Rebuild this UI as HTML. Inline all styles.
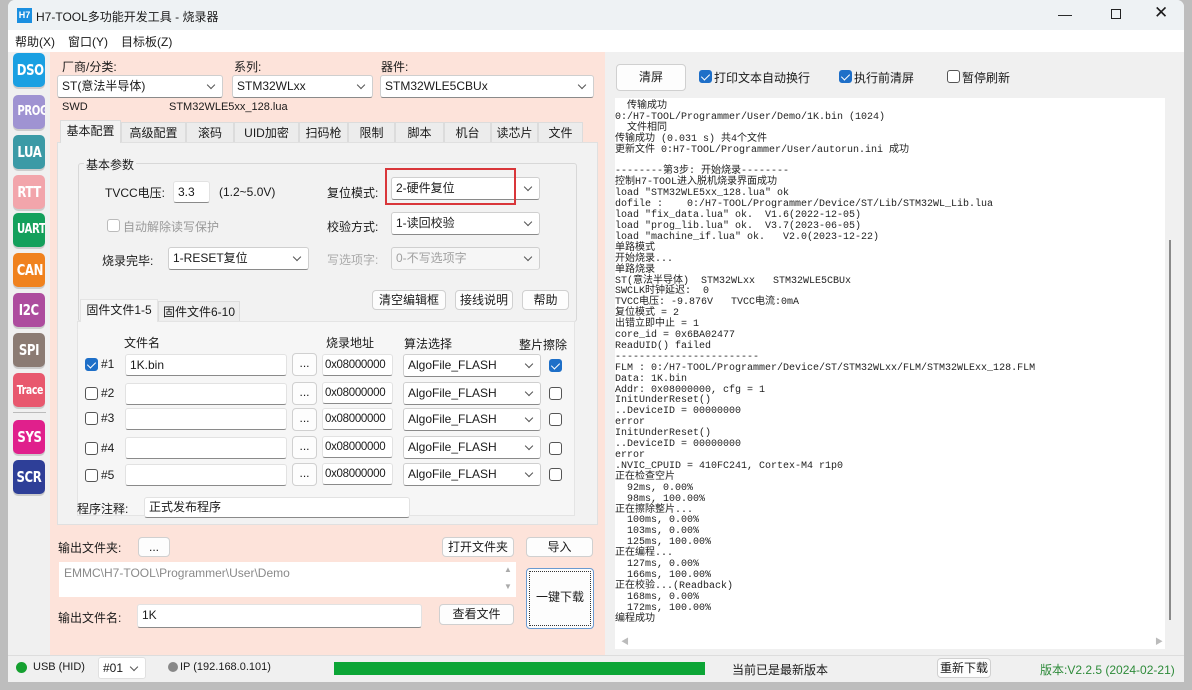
<!DOCTYPE html>
<html><head><meta charset="utf-8"><style>
*{box-sizing:border-box;margin:0;padding:0}
body{width:1192px;height:690px;background:#bdbdbd;font-family:"Liberation Sans","Noto Sans CJK SC",sans-serif;font-size:12px;color:#1a1a1a;position:relative;overflow:hidden}
.a{position:absolute}
.win{left:8px;top:0;width:1176px;height:682px;background:#f0f0f0;border-radius:7px 7px 0 0;overflow:hidden}
.combo{position:absolute;background:#fff;border:1px solid #cfcfcf;border-bottom:1px solid #8a8a8a;border-radius:3px;height:23px;line-height:21px;padding-left:4px;font-size:12px;white-space:nowrap}
.combo:after{content:"";position:absolute;right:8px;top:6px;width:5px;height:5px;border-right:1px solid #555;border-bottom:1px solid #555;transform:rotate(45deg)}
.dis{color:#a0a0a0;background:#f6f6f6;border-bottom-color:#ddd}
.inp{position:absolute;background:#fff;border:1px solid #e2e2e2;border-bottom:1px solid #8a8a8a;border-radius:3px;height:22px;line-height:20px;padding-left:4px;font-size:12px;white-space:nowrap;overflow:hidden}
.addr{padding-left:2px;font-size:11.5px;letter-spacing:-0.3px}
.btn{position:absolute;background:#fdfdfd;border:1px solid #d0d0d0;border-radius:4px;text-align:center;font-size:12px;height:20px;line-height:18px}
.cb{position:absolute;width:13px;height:13px;border:1px solid #555;border-radius:3px;background:#fff}
.cb.on{background:#1e6fc8;border-color:#1e6fc8}
.cb.on:after{content:"";position:absolute;left:3px;top:1px;width:4px;height:7px;border-right:1.5px solid #fff;border-bottom:1.5px solid #fff;transform:rotate(45deg)}
.ic{position:absolute;left:5px;width:32px;height:34px;border-radius:5px;color:#fff;font-weight:bold;font-family:"DejaVu Sans","Liberation Sans",sans-serif;font-size:15px;text-align:center;line-height:34px;box-shadow:0 2px 0 rgba(0,0,0,.15);overflow:hidden;white-space:nowrap}
.ic span{display:inline-block;transform:scaleX(.78);letter-spacing:-0.5px}
.tab{position:absolute;top:122px;height:20px;line-height:20px;text-align:center;background:#ececec;border:1px solid #dcdcdc;border-bottom:none;font-size:12px}
.log{position:absolute;left:615px;top:98px;width:550px;height:537px;background:#fff;font-family:"Liberation Mono","Noto Sans CJK SC",monospace;font-size:10px;line-height:10.9px;white-space:pre;color:#222;padding-top:4px;overflow:hidden}
</style></head><body>
<div class="a win">
<div class="a" style="left:0;top:0;width:1176px;height:30px;background:#eef2f4"></div>
<div class="a" style="left:9px;top:8px;width:15px;height:15px;background:#1a8fe0;color:#fff;font-size:9px;font-weight:bold;text-align:center;line-height:15px">H7</div>
<div class="a" style="left:28px;top:8px;font-size:12px">H7-TOOL多功能开发工具 - 烧录器</div>
<div class="a" style="left:1050px;top:6px;font-size:14px">—</div>
<div class="a" style="left:1103px;top:9px;width:10px;height:10px;border:1px solid #222"></div>
<div class="a" style="left:1146px;top:3px;font-size:17px">✕</div>
<div class="a" style="left:0;top:30px;width:1176px;height:22px;background:#fff"></div>
<div class="a" style="left:7px;top:33px">帮助(X)</div>
<div class="a" style="left:60px;top:33px">窗口(Y)</div>
<div class="a" style="left:113px;top:33px">目标板(Z)</div>
<div class="ic" style="top:53px;background:#1aa0e2"><span>DSO</span></div>
<div class="ic" style="top:95px;background:#9f93d2;font-size:13px"><span>PROG</span></div>
<div class="ic" style="top:135px;background:#3b9aa6"><span>LUA</span></div>
<div class="ic" style="top:175px;background:#f2a5ab"><span>RTT</span></div>
<div class="ic" style="top:213px;background:#14a05c;font-size:13px"><span>UART</span></div>
<div class="ic" style="top:253px;background:#f0821e"><span>CAN</span></div>
<div class="ic" style="top:293px;background:#ad4c9e"><span>I2C</span></div>
<div class="ic" style="top:333px;background:#8b7b73"><span>SPI</span></div>
<div class="ic" style="top:373px;background:#e8586e;font-size:12px"><span>Trace</span></div>
<div class="a" style="left:5px;top:412px;width:33px;height:1px;background:#bbb"></div>
<div class="ic" style="top:420px;background:#e0208c"><span>SYS</span></div>
<div class="ic" style="top:460px;background:#2e3f98"><span>SCR</span></div>
<div class="a" style="left:42px;top:52px;width:555px;height:603px;background:#fde3da"></div>
<div class="a" style="left:54px;top:58px">厂商/分类:</div>
<div class="a" style="left:226px;top:58px">系列:</div>
<div class="a" style="left:373px;top:58px">器件:</div>
<div class="combo" style="left:49px;top:75px;width:166px">ST(意法半导体)</div>
<div class="combo" style="left:224px;top:75px;width:141px">STM32WLxx</div>
<div class="combo" style="left:372px;top:75px;width:214px">STM32WLE5CBUx</div>
<div class="a" style="left:54px;top:101px;font-size:11px">SWD</div>
<div class="a" style="left:161px;top:101px;font-size:11px">STM32WLE5xx_128.lua</div>
<div class="a" style="left:49px;top:142px;width:541px;height:383px;background:#f2f2f2;border:1px solid #e0e0e0"></div>
<div class="tab" style="left:52px;width:61px;background:#f2f2f2;top:120px;height:23px">基本配置</div>
<div class="tab" style="left:113px;width:65px">高级配置</div>
<div class="tab" style="left:178px;width:48px">滚码</div>
<div class="tab" style="left:226px;width:65px">UID加密</div>
<div class="tab" style="left:291px;width:49px">扫码枪</div>
<div class="tab" style="left:340px;width:47px">限制</div>
<div class="tab" style="left:387px;width:49px">脚本</div>
<div class="tab" style="left:436px;width:47px">机台</div>
<div class="tab" style="left:483px;width:47px">读芯片</div>
<div class="tab" style="left:530px;width:45px">文件</div>
<div class="a" style="left:70px;top:163px;width:499px;height:159px;border:1px solid #d8d8d8;border-radius:3px"></div>
<div class="a" style="left:76px;top:156px;background:#f2f2f2;padding:0 2px">基本参数</div>
<div class="a" style="left:97px;top:184px">TVCC电压:</div>
<div class="inp" style="left:165px;top:181px;width:37px">3.3</div>
<div class="a" style="left:211px;top:185px">(1.2~5.0V)</div>
<div class="a" style="left:319px;top:184px">复位模式:</div>
<div class="combo" style="left:383px;top:177px;width:149px">2-硬件复位</div>
<div class="a" style="left:377px;top:168px;width:131px;height:37px;border:2px solid #d9363a"></div>
<div class="cb" style="left:99px;top:219px;border-color:#bbb"></div>
<div class="a" style="left:115px;top:218px;color:#9a9a9a">自动解除读写保护</div>
<div class="a" style="left:319px;top:218px">校验方式:</div>
<div class="combo" style="left:383px;top:212px;width:149px">1-读回校验</div>
<div class="a" style="left:94px;top:252px">烧录完毕:</div>
<div class="combo" style="left:160px;top:247px;width:141px">1-RESET复位</div>
<div class="a" style="left:319px;top:251px;color:#aaa">写选项字:</div>
<div class="combo dis" style="left:383px;top:247px;width:149px">0-不写选项字</div>
<div class="btn" style="left:364px;top:290px;width:74px">清空编辑框</div>
<div class="btn" style="left:447px;top:290px;width:58px">接线说明</div>
<div class="btn" style="left:514px;top:290px;width:47px">帮助</div>
<div class="a" style="left:69px;top:321px;width:498px;height:195px;background:#f6f6f6;border:1px solid #e4e4e4"></div>
<div class="tab" style="left:72px;top:299px;width:78px;height:23px;background:#f6f6f6;border-color:#e4e4e4">固件文件1-5</div>
<div class="tab" style="left:150px;top:301px;width:82px;background:#ededed">固件文件6-10</div>
<div class="a" style="left:116px;top:334px">文件名</div>
<div class="a" style="left:318px;top:334px">烧录地址</div>
<div class="a" style="left:396px;top:335px">算法选择</div>
<div class="a" style="left:511px;top:336px">整片擦除</div>
<div class="cb on" style="left:77px;top:358px"></div><div class="a" style="left:93px;top:357px">#1</div>
<div class="inp" style="left:117px;top:354px;width:162px">1K.bin</div>
<div class="btn" style="left:284px;top:353px;width:25px;height:23px">...</div>
<div class="inp addr" style="left:314px;top:354px;width:71px">0x08000000</div>
<div class="combo" style="left:395px;top:354px;width:138px">AlgoFile_FLASH</div>
<div class="cb on" style="left:541px;top:359px"></div>
<div class="cb" style="left:77px;top:387px"></div><div class="a" style="left:93px;top:386px">#2</div>
<div class="inp" style="left:117px;top:383px;width:162px"></div>
<div class="btn" style="left:284px;top:382px;width:25px;height:23px">...</div>
<div class="inp addr" style="left:314px;top:382px;width:71px">0x08000000</div>
<div class="combo" style="left:395px;top:382px;width:138px">AlgoFile_FLASH</div>
<div class="cb" style="left:541px;top:387px"></div>
<div class="cb" style="left:77px;top:412px"></div><div class="a" style="left:93px;top:411px">#3</div>
<div class="inp" style="left:117px;top:408px;width:162px"></div>
<div class="btn" style="left:284px;top:408px;width:25px;height:23px">...</div>
<div class="inp addr" style="left:314px;top:408px;width:71px">0x08000000</div>
<div class="combo" style="left:395px;top:408px;width:138px">AlgoFile_FLASH</div>
<div class="cb" style="left:541px;top:413px"></div>
<div class="cb" style="left:77px;top:442px"></div><div class="a" style="left:93px;top:441px">#4</div>
<div class="inp" style="left:117px;top:437px;width:162px"></div>
<div class="btn" style="left:284px;top:436px;width:25px;height:23px">...</div>
<div class="inp addr" style="left:314px;top:436px;width:71px">0x08000000</div>
<div class="combo" style="left:395px;top:436px;width:138px">AlgoFile_FLASH</div>
<div class="cb" style="left:541px;top:442px"></div>
<div class="cb" style="left:77px;top:469px"></div><div class="a" style="left:93px;top:468px">#5</div>
<div class="inp" style="left:117px;top:464px;width:162px"></div>
<div class="btn" style="left:284px;top:463px;width:25px;height:23px">...</div>
<div class="inp addr" style="left:314px;top:463px;width:71px">0x08000000</div>
<div class="combo" style="left:395px;top:463px;width:138px">AlgoFile_FLASH</div>
<div class="cb" style="left:541px;top:468px"></div>
<div class="a" style="left:69px;top:500px">程序注释:</div>
<div class="inp" style="left:136px;top:497px;width:266px;height:21px;line-height:19px">正式发布程序</div>
<div class="a" style="left:50px;top:539px">输出文件夹:</div>
<div class="btn" style="left:130px;top:537px;width:32px">...</div>
<div class="btn" style="left:434px;top:537px;width:72px">打开文件夹</div>
<div class="btn" style="left:518px;top:537px;width:67px">导入</div>
<div class="a" style="left:51px;top:562px;width:457px;height:35px;background:#fff;color:#8a8a8a;padding:4px 5px">EMMC\H7-TOOL\Programmer\User\Demo</div>
<div class="a" style="left:496px;top:565px;font-size:8px;color:#aaa">▲</div>
<div class="a" style="left:496px;top:582px;font-size:8px;color:#aaa">▼</div>
<div class="btn" style="left:518px;top:568px;width:68px;height:61px;line-height:57px;border:1px solid #6a9ad0;outline:1px dotted #333;outline-offset:-4px">一键下载</div>
<div class="a" style="left:50px;top:609px">输出文件名:</div>
<div class="inp" style="left:129px;top:604px;width:285px;height:24px">1K</div>
<div class="btn" style="left:431px;top:604px;width:75px;height:21px">查看文件</div>
<div class="btn" style="left:608px;top:64px;width:70px;height:27px;line-height:25px">清屏</div>
<div class="cb on" style="left:691px;top:70px"></div><div class="a" style="left:706px;top:69px">打印文本自动换行</div>
<div class="cb on" style="left:831px;top:70px"></div><div class="a" style="left:846px;top:69px">执行前清屏</div>
<div class="cb" style="left:939px;top:70px"></div><div class="a" style="left:954px;top:69px">暂停刷新</div>
<div class="log" style="left:607px">  传输成功
0:/H7-TOOL/Programmer/User/Demo/1K.bin (1024)
  文件相同
传输成功 (0.031 s) 共4个文件
更新文件 0:H7-TOOL/Programmer/User/autorun.ini 成功

--------第3步: 开始烧录--------
控制H7-TOOL进入脱机烧录界面成功
load "STM32WLE5xx_128.lua" ok
dofile :    0:/H7-TOOL/Programmer/Device/ST/Lib/STM32WL_Lib.lua
load "fix_data.lua" ok.  V1.6(2022-12-05)
load "prog_lib.lua" ok.  V3.7(2023-06-05)
load "machine_if.lua" ok.   V2.0(2023-12-22)
单路模式
开始烧录...
单路烧录
ST(意法半导体)  STM32WLxx   STM32WLE5CBUx
SWCLK时钟延迟:  0
TVCC电压: -9.876V   TVCC电流:0mA
复位模式 = 2
出错立即中止 = 1
core_id = 0x6BA02477
ReadUID() failed
------------------------
FLM : 0:/H7-TOOL/Programmer/Device/ST/STM32WLxx/FLM/STM32WLExx_128.FLM
Data: 1K.bin
Addr: 0x08000000, cfg = 1
InitUnderReset()
..DeviceID = 00000000
error
InitUnderReset()
..DeviceID = 00000000
error
.NVIC_CPUID = 410FC241, Cortex-M4 r1p0
正在检查空片
  92ms, 0.00%
  98ms, 100.00%
正在擦除整片...
  100ms, 0.00%
  103ms, 0.00%
  125ms, 100.00%
正在编程...
  127ms, 0.00%
  166ms, 100.00%
正在校验...(Readback)
  168ms, 0.00%
  172ms, 100.00%
编程成功</div>
<div class="a" style="left:1161px;top:240px;width:2px;height:380px;background:#8a8a8a"></div>
<div class="a" style="left:607px;top:635px;width:550px;height:14px;background:#fff"></div>
<div class="a" style="left:613px;top:636px;font-size:8px;color:#bbb">◀</div>
<div class="a" style="left:1147px;top:636px;font-size:8px;color:#bbb">▶</div>
<div class="a" style="left:0;top:655px;width:1176px;height:27px;background:#f0f0f0;border-top:1px solid #ddd"></div>
<div class="a" style="left:8px;top:662px;width:11px;height:11px;border-radius:50%;background:#15a030"></div>
<div class="a" style="left:25px;top:661px;font-size:11px">USB (HID)</div>
<div class="combo" style="left:90px;top:657px;width:48px;height:22px;line-height:20px;border-color:#e0e0e0">#01</div>
<div class="a" style="left:160px;top:662px;width:10px;height:10px;border-radius:50%;background:#888"></div>
<div class="a" style="left:172px;top:661px;font-size:11px">IP (192.168.0.101)</div>
<div class="a" style="left:326px;top:662px;width:371px;height:13px;background:#0ca536"></div>
<div class="a" style="left:724px;top:661px">当前已是最新版本</div>
<div class="btn" style="left:929px;top:658px;width:54px">重新下载</div>
<div class="a" style="left:1032px;top:661px;color:#2e8b3a">版本:V2.2.5 (2024-02-21)</div>
</div>
</body></html>
